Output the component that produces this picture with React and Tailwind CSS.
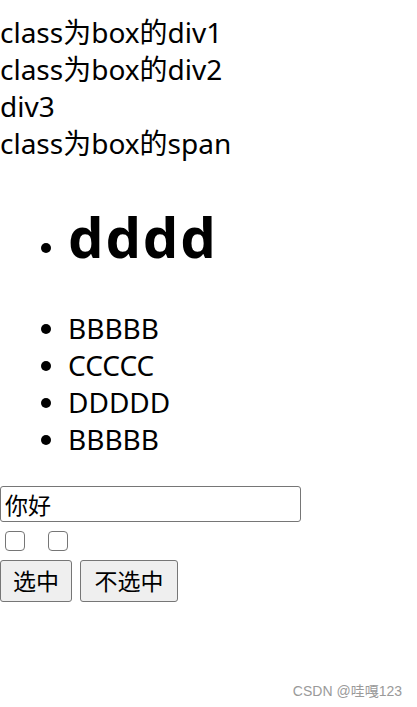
import React from "react";

export default function App() {
  return (
    <div
      className="relative min-h-[707px] w-[417px] bg-white pt-[14px] text-[28px] leading-[37px] text-black font-['Noto_Sans','Noto_Sans_CJK_SC',sans-serif]"
    >
      <div>class为box的div1</div>
      <div>class为box的div2</div>
      <div>div3</div>
      <div>class为box的span</div>

      <ul className="mt-[37px] mb-[28px] list-disc pl-[68px]">
        <li>
          <h1 className="mb-[37px] text-[56px] font-bold leading-[74px] tracking-[2px]">dddd</h1>
        </li>
        <li>BBBBB</li>
        <li>CCCCC</li>
        <li>DDDDD</li>
        <li>BBBBB</li>
      </ul>

      <input
        defaultValue="你好"
        className="block h-[36px] w-[301px] rounded-[3px] border border-[#767676] px-[4px] text-[23px] leading-[30px] outline-none"
      />

      <div className="flex h-[38px] items-center">
        <span className="ml-[5px] h-[20px] w-[20px] rounded-[4px] border-[1.5px] border-[#767676] bg-white" />
        <span className="ml-[23px] h-[20px] w-[20px] rounded-[4px] border-[1.5px] border-[#767676] bg-white" />
      </div>

      <div className="flex gap-[8px]">
        <button className="h-[42px] w-[72px] rounded-[3px] border border-[#767676] bg-[#efefef] text-[23px] leading-[30px]">
          选中
        </button>
        <button className="h-[42px] w-[98px] rounded-[3px] border border-[#767676] bg-[#efefef] text-[23px] leading-[30px]">
          不选中
        </button>
      </div>

      <div className="absolute bottom-[8px] right-[15px] text-[14px] leading-[16px] text-[#9a9a9a] font-['Liberation_Sans','Noto_Sans_CJK_SC',sans-serif]">
        CSDN @哇嘎123
      </div>
    </div>
  );
}
